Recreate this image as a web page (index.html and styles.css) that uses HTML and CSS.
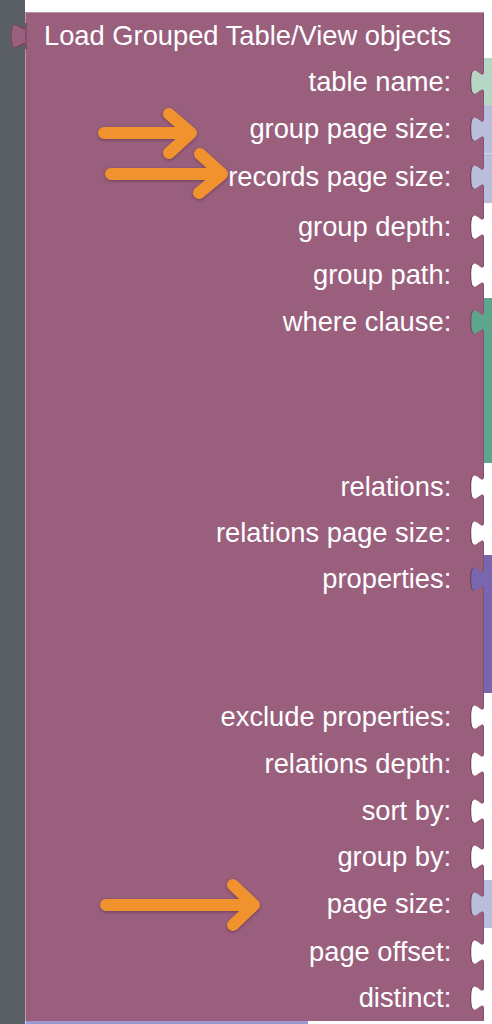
FILE: index.html
```html
<!DOCTYPE html>
<html lang="en">
<head>
    <meta charset="UTF-8">
    <meta name="viewport" content="width=device-width, initial-scale=1.0">
    <title>Load Grouped Table/View objects</title>
    <link rel="stylesheet" href="styles.css">
</head>
<body>

    <div class="workspace">
        <div class="toolbox"></div>

        <div class="canvas">
            <div class="block">
                <svg class="output-tab" width="15" height="27" viewBox="0 0 15 27">
                    <path d="M15 0 C15 17.5 0 -14 0 13.1 C0 40.2 15 8.7 15 26.2 Z"/>
                </svg>

                <div class="row title">
                    <span class="label">Load Grouped Table/View objects</span>
                    <span class="socket"></span>
                    <span class="plug"></span>
                </div>
                <div class="row mint">
                    <span class="label">table name:</span>
                    <span class="socket"></span>
                    <span class="plug"></span>
                </div>
                <div class="row lav long">
                    <span class="label">group page size:</span>
                    <span class="socket"></span>
                    <span class="plug"></span>
                </div>
                <div class="row lav longer split">
                    <span class="label">records page size:</span>
                    <span class="socket"></span>
                    <span class="plug"></span>
                </div>
                <div class="row long">
                    <span class="label">group depth:</span>
                    <span class="socket"></span>
                    <span class="plug"></span>
                </div>
                <div class="row">
                    <span class="label">group path:</span>
                    <span class="socket"></span>
                    <span class="plug"></span>
                </div>
                <div class="row teal where">
                    <span class="label">where clause:</span>
                    <span class="socket"></span>
                    <span class="plug"></span>
                </div>
                <div class="row short">
                    <span class="label">relations:</span>
                    <span class="socket"></span>
                    <span class="plug"></span>
                </div>
                <div class="row short">
                    <span class="label">relations page size:</span>
                    <span class="socket"></span>
                    <span class="plug"></span>
                </div>
                <div class="row violet props">
                    <span class="label">properties:</span>
                    <span class="socket"></span>
                    <span class="plug"></span>
                </div>
                <div class="row">
                    <span class="label">exclude properties:</span>
                    <span class="socket"></span>
                    <span class="plug"></span>
                </div>
                <div class="row">
                    <span class="label">relations depth:</span>
                    <span class="socket"></span>
                    <span class="plug"></span>
                </div>
                <div class="row short">
                    <span class="label">sort by:</span>
                    <span class="socket"></span>
                    <span class="plug"></span>
                </div>
                <div class="row">
                    <span class="label">group by:</span>
                    <span class="socket"></span>
                    <span class="plug"></span>
                </div>
                <div class="row lav long">
                    <span class="label">page size:</span>
                    <span class="socket"></span>
                    <span class="plug"></span>
                </div>
                <div class="row short">
                    <span class="label">page offset:</span>
                    <span class="socket"></span>
                    <span class="plug"></span>
                </div>
                <div class="row short">
                    <span class="label">distinct:</span>
                    <span class="socket"></span>
                    <span class="plug"></span>
                </div>
            </div>

            <div class="next-block"></div>
        </div>

        <!-- annotation arrows drawn over the block -->
        <svg class="arrows" width="492" height="1024" viewBox="0 0 492 1024">
            <path d="M104 133 H189 M169 114 L191 133 L169 153"/>
            <path d="M111 174 H220 M200 154 L222 174 L199 193"/>
            <path d="M106 905 H252 M233 885 L254 905 L233 925"/>
        </svg>
    </div>

</body>
</html>
```

FILE: styles.css
```css
* {
    box-sizing: border-box;
}
body {
    margin: 0;
    background: #fff;
    font-family: "Liberation Sans", Arial, sans-serif;
    overflow: hidden;
}
.workspace {
    position: relative;
    display: flex;
    width: 492px;
    height: 1024px;
    overflow: hidden;
}
.toolbox {
    width: 25px;
    flex: none;
    background: #5b6067;
}
.canvas {
    flex: 1;
    display: flex;
    flex-direction: column;
    padding-top: 12px;
}
.block {
    position: relative;
    display: flex;
    flex-direction: column;
}

/* output connector sticking out on the left */
.output-tab {
    position: absolute;
    left: -14px;
    top: 11px;
    overflow: visible;
}
.output-tab path {
    fill: #995f7d;
    stroke: #6e3f58;
    stroke-width: 1;
}

.row {
    --fill: #fff;
    --plug: transparent;
    display: grid;
    grid-template-columns: 1fr 13px 8px;
    height: 47px;
}
.row.short {
    height: 46px;
}
.row.long {
    height: 48px;
}
.row.longer {
    height: 50px;
}
.row.where {
    height: 165px;
}
.row.props {
    height: 138px;
}
.row.mint {
    --fill: #b6d7c6;
    --plug: #b6d7c6;
}
.row.lav {
    --fill: #b9bedb;
    --plug: #b9bedb;
}
.row.teal {
    --fill: #5ea68b;
    --plug: #5ea68b;
}
.row.violet {
    --fill: #7966ae;
    --plug: #7966ae;
}

.label {
    background: #995f7d;
    color: #fff;
    font-size: 27.3px;
    line-height: 47px;
    text-align: right;
    padding-right: 20px;
    white-space: nowrap;
    border-left: 1px solid #b995aa;
}
.socket {
    position: relative;
    background: #995f7d;
    box-shadow: inset -1px 0 0 #84506c;
}
.socket::before,
.socket::after {
    content: "";
    position: absolute;
    left: 0;
    top: 11px;
    width: 13px;
    height: 27px;
    clip-path: path("M13 0 C13 17.5 0 -14 0 13.1 C0 40.2 13 8.7 13 26.2 Z");
}
.socket::before {
    background: #6e3f58;
    left: -1px;
}
.socket::after {
    background: var(--fill);
}
.plug {
    background: var(--plug);
}
.row.split .plug {
    border-top: 1px solid #d4d7ea;
}

.title {
    height: 46px;
}
.title .label {
    text-align: left;
    padding-left: 18px;
    line-height: 46px;
    border-top: 1px solid #b995aa;
}
.title .socket {
    border-top: 1px solid #b995aa;
}
.title .socket::before,
.title .socket::after {
    display: none;
}

.next-block {
    flex: 1;
    width: 283px;
    background: #9899cf;
    border-top: 1px solid #6f6fa8;
    border-left: 1px solid #d9d9ee;
}

.arrows {
    position: absolute;
    top: 0;
    left: 0;
    pointer-events: none;
    filter: drop-shadow(0 1px 1.5px rgba(60, 20, 40, 0.45));
}
.arrows path {
    fill: none;
    stroke: #f0932f;
    stroke-width: 12;
    stroke-linecap: round;
    stroke-linejoin: round;
}
```
